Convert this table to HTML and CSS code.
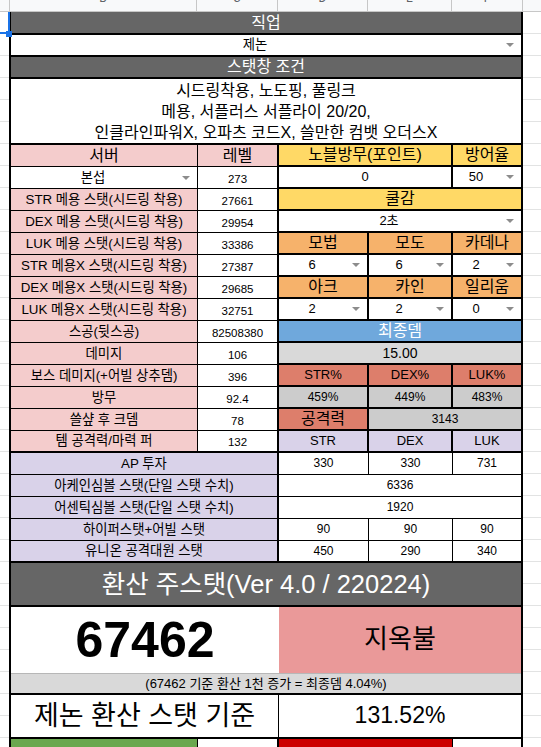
FILE: index.html
```html
<!DOCTYPE html>
<html lang="ko">
<head>
<meta charset="utf-8">
<title>환산 주스탯</title>
<link rel="stylesheet" href="styles.css">
</head>
<body>
<div class="colhead">
  <div class="ch ch-a"></div>
  <div class="ch ch-b"><span>B</span></div>
  <div class="ch ch-c"><span>C</span></div>
  <div class="ch ch-d"><span>D</span></div>
  <div class="ch ch-e"><span>E</span></div>
  <div class="ch ch-f"><span>F</span></div>
  <div class="ch ch-g"></div>
</div>
<div class="sheet">
  <div class="side side-a"></div>
  <div class="tbl">
    <div class="c s5 b2 band">직업</div>
    <div class="c s5 b2 dd small"><span class="t">제논</span><span class="arr"></span></div>
    <div class="c s5 b2 band">스탯창 조건</div>
    <div class="c s5 b2 cond"><span>시드링착용, 노도핑, 풀링크</span><span>메용, 서플러스 서플라이 20/20,</span><span>인클라인파워X, 오파츠 코드X, 쓸만한 컴뱃 오더스X</span></div>

    <div class="c r1 b1 pink h16">서버</div>
    <div class="c r2 b1 pink h16">레벨</div>
    <div class="c s2 r2 b2 yel h16">노블방무(포인트)</div>
    <div class="c b2 yel h16">방어율</div>

    <div class="c r1 b1 dd small"><span class="t">본섭</span><span class="arr"></span></div>
    <div class="c r2 b1 num">273</div>
    <div class="c s2 r2 b2 v13">0</div>
    <div class="c b2 dd v13"><span class="t">50</span><span class="arr"></span></div>

    <div class="c r1 b1 pink">STR 메용 스탯(시드링 착용)</div>
    <div class="c r2 b1 num">27661</div>
    <div class="c s3 b2 yel h16">쿨감</div>

    <div class="c r1 b1 pink">DEX 메용 스탯(시드링 착용)</div>
    <div class="c r2 b1 num">29954</div>
    <div class="c s3 b2 dd v13"><span class="t">2초</span><span class="arr"></span></div>

    <div class="c r1 b1 pink">LUK 메용 스탯(시드링 착용)</div>
    <div class="c r2 b1 num">33386</div>
    <div class="c r2 b2 org h16">모법</div>
    <div class="c r2 b2 org h16">모도</div>
    <div class="c b2 org h16">카데나</div>

    <div class="c r1 b1 pink">STR 메용X 스탯(시드링 착용)</div>
    <div class="c r2 b1 num">27387</div>
    <div class="c r2 b2 dd v13"><span class="t">6</span><span class="arr"></span></div>
    <div class="c r2 b2 dd v13"><span class="t">6</span><span class="arr"></span></div>
    <div class="c b2 dd v13"><span class="t">2</span><span class="arr"></span></div>

    <div class="c r1 b1 pink">DEX 메용X 스탯(시드링 착용)</div>
    <div class="c r2 b1 num">29685</div>
    <div class="c r2 b2 org h16">아크</div>
    <div class="c r2 b2 org h16">카인</div>
    <div class="c b2 org h16">일리움</div>

    <div class="c r1 b1 pink">LUK 메용X 스탯(시드링 착용)</div>
    <div class="c r2 b1 num">32751</div>
    <div class="c r2 b2 dd v13"><span class="t">2</span><span class="arr"></span></div>
    <div class="c r2 b2 dd v13"><span class="t">2</span><span class="arr"></span></div>
    <div class="c b2 dd v13"><span class="t">0</span><span class="arr"></span></div>

    <div class="c r1 b1 pink">스공(뒷스공)</div>
    <div class="c r2 b1 num">82508380</div>
    <div class="c s3 b2 blue h16">최종뎀</div>

    <div class="c r1 b1 pink">데미지</div>
    <div class="c r2 b1 num">106</div>
    <div class="c s3 b2 gray v14">15.00</div>

    <div class="c r1 b1 pink">보스 데미지(+어빌 상추뎀)</div>
    <div class="c r2 b1 num">396</div>
    <div class="c r2 b2 berry v13">STR%</div>
    <div class="c r2 b2 berry v13">DEX%</div>
    <div class="c b2 berry v13">LUK%</div>

    <div class="c r1 b1 pink">방무</div>
    <div class="c r2 b1 num">92.4</div>
    <div class="c r2 b2 gray2 v12">459%</div>
    <div class="c r2 b2 gray2 v12">449%</div>
    <div class="c b2 gray2 v12">483%</div>

    <div class="c r1 b1 pink">쓸샾 후 크뎀</div>
    <div class="c r2 b1 num">78</div>
    <div class="c r2 b2 berry h16">공격력</div>
    <div class="c s2 b2 gray2 v12">3143</div>

    <div class="c r1 b2 pink">템 공격력/마력 퍼</div>
    <div class="c r2 b2 num">132</div>
    <div class="c r2 b2 lav v13">STR</div>
    <div class="c r2 b2 lav v13">DEX</div>
    <div class="c b2 lav v13">LUK</div>

    <div class="c s2 r2 b1 lav">AP 투자</div>
    <div class="c r1 b1 v12">330</div>
    <div class="c r1 b1 v12">330</div>
    <div class="c b1 v12">731</div>

    <div class="c s2 r2 b1 lav">아케인심볼 스탯(단일 스탯 수치)</div>
    <div class="c s3 b1 v12">6336</div>

    <div class="c s2 r2 b1 lav">어센틱심볼 스탯(단일 스탯 수치)</div>
    <div class="c s3 b1 v12">1920</div>

    <div class="c s2 r2 b1 lav">하이퍼스탯+어빌 스탯</div>
    <div class="c r1 b1 v12">90</div>
    <div class="c r1 b1 v12">90</div>
    <div class="c b1 v12">90</div>

    <div class="c s2 r2 b2 lav">유니온 공격대원 스탯</div>
    <div class="c r1 b2 v12">450</div>
    <div class="c r1 b2 v12">290</div>
    <div class="c b2 v12">340</div>

    <div class="c s5 b2 band title">환산 주스탯(Ver 4.0 / 220224)</div>

    <div class="c s2 big">67462</div>
    <div class="c s3 rose hell">지옥불</div>

    <div class="c s5 b2 gray note">(67462 기준 환산 1천 증가 = 최종뎀 4.04%)</div>

    <div class="c s2 r1 b2 ref">제논 환산 스탯 기준</div>
    <div class="c s3 b2 pct">131.52%</div>

    <div class="c r1 green"></div>
    <div class="c r2"></div>
    <div class="c s2 r1 red"></div>
    <div class="c"></div>
  </div>
  <div class="side side-g"></div>
  <div class="sel-r"></div>
  <div class="sel-b"></div>
  <div class="handle"></div>
</div>
</body>
</html>
```

FILE: styles.css
```css
* { box-sizing: border-box; }
html, body { margin: 0; padding: 0; }
body {
  width: 541px;
  height: 747px;
  overflow: hidden;
  background: #fff;
  color: #000;
  font-family: "Liberation Sans", "Noto Sans CJK KR", sans-serif;
}

/* column header strip */
.colhead {
  display: flex;
  height: 12px;
  background: #f8f9fa;
  border-bottom: 1px solid #c7c7c7;
}
.ch {
  height: 100%;
  border-right: 1px solid #c7c7c7;
  display: flex;
  justify-content: center;
  overflow: hidden;
  font-family: Roboto, "Liberation Sans", sans-serif;
  font-size: 12px;
  color: #5f6368;
}
.ch span { line-height: 12px; margin-top: -8px; }
.ch-a { width: 10px; }
.ch-b { width: 187px; }
.ch-c { width: 81px; }
.ch-d { width: 90px; }
.ch-e { width: 84px; }
.ch-f { width: 71px; }
.ch-g { flex: 1; border-right: 0; }

/* sheet body */
.sheet {
  position: relative;
  display: flex;
  height: 735px;
}
.side {
  background: repeating-linear-gradient(to bottom, #fff 0 21px, #e2e3e3 21px 22px);
}
.side-a { width: 9px; }
.side-g { flex: 1; }

.tbl {
  width: 514px;
  display: grid;
  grid-template-columns: 187px 81px 90px 84px 68px;
  grid-template-rows: 23px 22px 22px 66px repeat(19, 22px) 44px 66px 22px 44px 22px;
  align-content: start;
  background: #000;
  border-left: 2px solid #000;
  border-right: 2px solid #000;
}

/* cells */
.c {
  display: flex;
  align-items: center;
  justify-content: center;
  min-width: 0;
  overflow: hidden;
  white-space: nowrap;
  background: #fff;
  font-size: 13.33px;
  line-height: 1.2;
}
.s2 { grid-column: span 2; }
.s3 { grid-column: span 3; }
.s5 { grid-column: span 5; }
.r1 { margin-right: 1px; }
.r2 { margin-right: 2px; }
.b1 { margin-bottom: 1px; }
.b2 { margin-bottom: 2px; }

/* fills */
.band { background: #666666; color: #fff; font-size: 16px; }
.pink { background: #f4cccc; }
.yel { background: #ffd966; }
.org { background: #f6b26b; }
.blue { background: #6fa8dc; color: #fff; }
.gray { background: #d9d9d9; }
.gray2 { background: #cccccc; }
.berry { background: #dd7e6b; }
.lav { background: #d9d2e9; }
.rose { background: #ea9999; }
.green { background: #6aa84f; }
.red { background: #cc0000; }

/* text sizes */
.h16 { font-size: 16px; }
.v14 { font-size: 14px; }
.v13 { font-size: 13px; }
.v12 { font-size: 12px; }
.small { font-size: 13.33px; }
.num {
  font-size: 11.5px;
  align-items: flex-end;
  padding-bottom: 1px;
}

/* dropdown chips */
.dd { justify-content: flex-start; padding-right: 7px; }
.dd .t { flex: 1; text-align: center; }
.dd .arr {
  width: 0;
  height: 0;
  margin-left: 7px;
  border-left: 4px solid transparent;
  border-right: 4px solid transparent;
  border-top: 4px solid #8c8c8c;
}

/* conditions block */
.cond {
  flex-direction: column;
  font-size: 16px;
  line-height: 21px;
}

/* summary */
.title { font-size: 25.5px; }
.big { font-size: 50px; font-weight: bold; }
.hell { font-size: 26px; }
.note { font-size: 13px; border-top: 1px solid #b7b7b7; }
.ref { font-size: 27px; }
.pct { font-size: 23px; }

/* selection (overlay) */
.sel-r { position: absolute; left: 8px; top: 0; width: 2px; height: 22px; background: #1a73e8; z-index: 2; }
.sel-b { position: absolute; left: 0; top: 20px; width: 9px; height: 2px; background: #1a73e8; z-index: 2; }
.handle { position: absolute; left: 6px; top: 19px; width: 6px; height: 6px; background: #1a73e8; z-index: 3; }
```
